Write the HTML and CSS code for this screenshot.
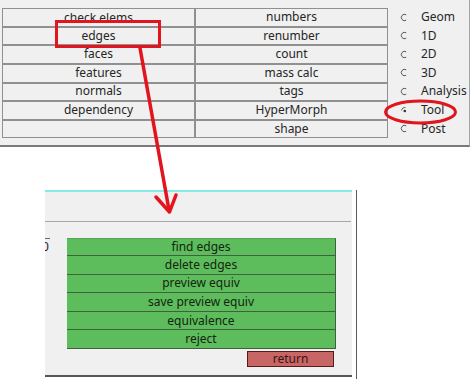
FILE: index.html
```html
<!DOCTYPE html>
<html>
<head>
<meta charset="utf-8">
<link rel="stylesheet" href="styles.css">
</head>
<body>
<div class="page">
  <div class="toolpanel">
    <div class="col">
      <div class="btn clip"><span>check elems</span></div>
      <div class="btn">edges</div>
      <div class="btn">faces</div>
      <div class="btn">features</div>
      <div class="btn">normals</div>
      <div class="btn">dependency</div>
      <div class="btn"></div>
    </div>
    <div class="col">
      <div class="btn">numbers</div>
      <div class="btn">renumber</div>
      <div class="btn">count</div>
      <div class="btn">mass calc</div>
      <div class="btn">tags</div>
      <div class="btn">HyperMorph</div>
      <div class="btn">shape</div>
    </div>
    <div class="radios">
      <div class="radio"><svg class="rdot" viewBox="0 0 9 9"><path d="M6.2 1.8 A3.2 3.2 0 1 0 6.2 7.2" /></svg><span>Geom</span></div>
      <div class="radio"><svg class="rdot" viewBox="0 0 9 9"><path d="M6.2 1.8 A3.2 3.2 0 1 0 6.2 7.2" /></svg><span>1D</span></div>
      <div class="radio"><svg class="rdot" viewBox="0 0 9 9"><path d="M6.2 1.8 A3.2 3.2 0 1 0 6.2 7.2" /></svg><span>2D</span></div>
      <div class="radio"><svg class="rdot" viewBox="0 0 9 9"><path d="M6.2 1.8 A3.2 3.2 0 1 0 6.2 7.2" /></svg><span>3D</span></div>
      <div class="radio"><svg class="rdot" viewBox="0 0 9 9"><path d="M6.2 1.8 A3.2 3.2 0 1 0 6.2 7.2" /></svg><span>Analysis</span></div>
      <div class="radio"><svg class="rdot" viewBox="0 0 9 9"><path d="M5.5 1.6 A3.2 3.2 0 0 0 1.6 4.5" /><circle class="dot" cx="4.8" cy="5" r="1.3" /></svg><span>Tool</span></div>
      <div class="radio"><svg class="rdot" viewBox="0 0 9 9"><path d="M6.2 1.8 A3.2 3.2 0 1 0 6.2 7.2" /></svg><span>Post</span></div>
    </div>
  </div>

  <div class="dlg-wrap">
    <div class="dialog">
      <div class="dlg-head"></div>
      <div class="dlg-body">
        <div class="entry"><span>0</span></div>
        <div class="actions">
          <div class="gbtn first">find edges</div>
          <div class="gbtn">delete edges</div>
          <div class="gbtn">preview equiv</div>
          <div class="gbtn">save preview equiv</div>
          <div class="gbtn">equivalence</div>
          <div class="gbtn">reject</div>
          <div class="rbtn">return</div>
        </div>
      </div>
    </div>
  </div>

  <svg class="annot" viewBox="0 0 474 379" width="474" height="379">
    <rect x="56.5" y="21.5" width="103" height="25" class="mark" />
    <ellipse cx="420.5" cy="112" rx="35" ry="11" class="mark" />
    <line x1="140" y1="48" x2="169" y2="210" class="mark arrow" />
    <polyline points="156,197 169.5,212 176,195" class="mark arrow" />
  </svg>
</div>
</body>
</html>
```

FILE: styles.css
```css
html, body {
  margin: 0;
  padding: 0;
  background: #ffffff;
}

body {
  font-family: "Noto Sans", "Open Sans", sans-serif;
  font-size: 12px;
  color: #262626;
}

.page {
  position: relative;
  width: 474px;
  height: 379px;
  overflow: hidden;
}

/* ---------- top tool panel ---------- */
.toolpanel {
  display: flex;
  width: 470px;
  height: 147px;
  box-sizing: border-box;
  background: #f0f0f0;
  padding: 8.3px 0 0 2px;
  border-right: 1px solid #a3a3a3;
  border-bottom: 2px solid #7a7a7a;
}

.col {
  width: 193px;
  display: flex;
  flex-direction: column;
}

.btn {
  height: 18.6px;
  box-sizing: border-box;
  border: 1px solid #909090;
  display: flex;
  align-items: center;
  justify-content: center;
  line-height: 16px;
  padding-bottom: 1px;
  white-space: nowrap;
}

.btn.clip {
  overflow: hidden;
}

.btn.clip span {
  display: block;
  height: 12px;
  line-height: 16px;
  overflow: hidden;
  margin-top: 2px;
  padding-top: 0;
}

.btn.clip span {
  line-height: 10px;
  height: 10px;
  margin-top: 1px;
}

.radios {
  flex: 1;
  display: flex;
  flex-direction: column;
}

.radio {
  height: 18.6px;
  display: flex;
  align-items: center;
  padding-left: 11.5px;
  padding-bottom: 1px;
  box-sizing: border-box;
  line-height: 16px;
}

.rdot {
  width: 9px;
  height: 9px;
  margin-right: 12.5px;
  flex: none;
}

.rdot path {
  fill: none;
  stroke: #5a5a5a;
  stroke-width: 1;
}

.rdot .dot {
  fill: #333333;
}

/* ---------- lower dialog ---------- */
.dlg-wrap {
  display: flex;
  width: 312px;
  height: 189px;
  margin: 43px 0 0 45px;
  box-sizing: border-box;
  border-right: 1.5px solid #5a5a5a;
}

.dialog {
  width: 307px;
  height: 187px;
  box-sizing: border-box;
  background: #f0f0f0;
  border-top: 2px solid #86e9ea;
  border-bottom: 2px solid #555555;
  overflow: hidden;
}

.dlg-head {
  height: 29px;
  margin-right: 1px;
  border-bottom: 1px solid #a8a8a8;
}

.dlg-body {
  display: flex;
  padding-top: 15.5px;
}

.entry {
  width: 22px;
  flex: none;
}

.entry span {
  display: block;
  width: 8px;
  margin-left: -3px;
  border-top: 1px solid #6a6a6a;
  line-height: 16px;
  color: #222;
}

.actions {
  width: 269px;
  flex: none;
}

.gbtn {
  height: 18.6px;
  box-sizing: border-box;
  background: #5dbd5d;
  border-bottom: 1.5px solid #3f6140;
  border-right: 1px solid #3f6140;
  display: flex;
  align-items: center;
  justify-content: center;
  line-height: 16px;
  color: #14240f;
  white-space: nowrap;
}

.gbtn.first {
  border-top: 1px solid #55a455;
}

.rbtn {
  width: 87px;
  height: 16px;
  margin: 1.7px 0 0 180px;
  box-sizing: border-box;
  background: #c86565;
  border: 1.5px solid #561c1c;
  display: flex;
  align-items: center;
  justify-content: center;
  line-height: 13px;
  color: #3a1414;
}

/* ---------- red annotations ---------- */
.annot {
  position: absolute;
  left: 0;
  top: 0;
  pointer-events: none;
}

.mark {
  fill: none;
  stroke: #e2141d;
  stroke-width: 3;
}

.arrow {
  stroke-width: 3.5;
  stroke-linecap: round;
  stroke-linejoin: round;
}
```
